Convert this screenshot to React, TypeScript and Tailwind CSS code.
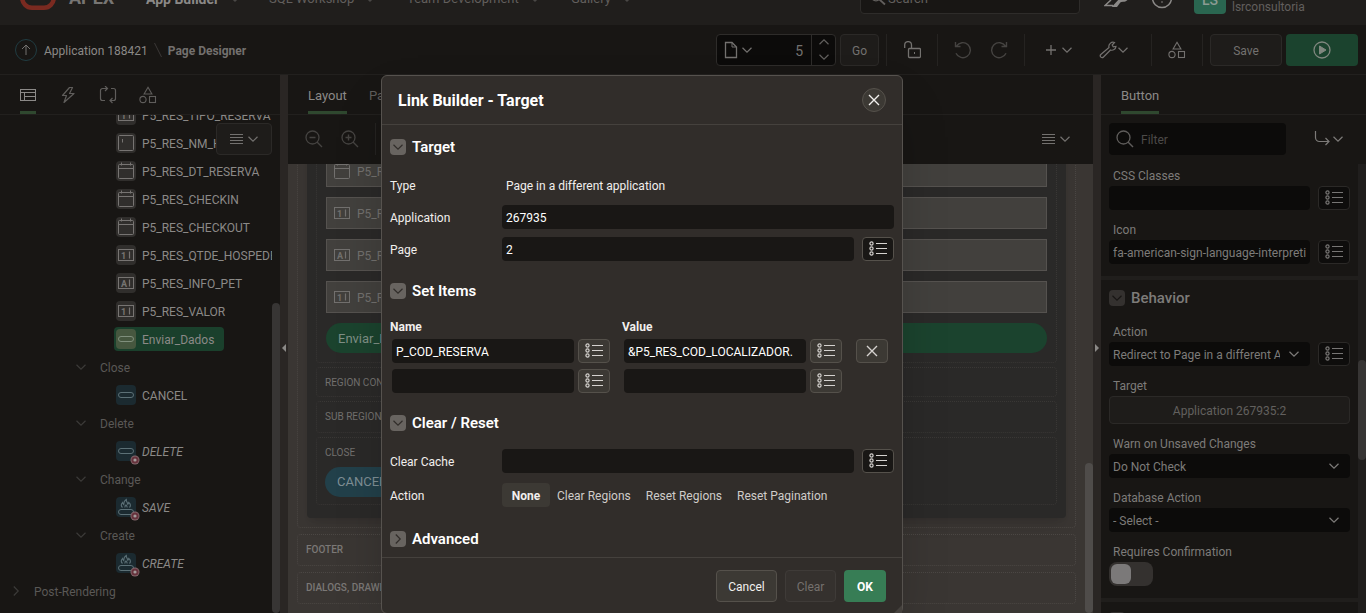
import React from "react";

type P = { className?: string };

function Svg({ className = "", children, size = 16 }: P & { children: React.ReactNode; size?: number }) {
  return (
    <svg width={size} height={size} viewBox={`0 0 ${size} ${size}`} fill="none" stroke="currentColor" className={"shrink-0 " + className} aria-hidden="true">
      {children}
    </svg>
  );
}

const Chevron = ({ className }: P) => (
  <Svg size={12} className={className}><path d="M1.5 3.8 6 8.2l4.5-4.4" strokeWidth="1.2" /></Svg>
);
const ChevronRight = ({ className }: P) => (
  <Svg size={12} className={className}><path d="M3.8 1.5 8.2 6l-4.4 4.5" strokeWidth="1.2" /></Svg>
);
const ListIcon = () => (
  <svg width="18" height="16" viewBox="0 0 18 16" fill="none" stroke="currentColor" className="shrink-0" aria-hidden="true">
    <circle cx="2.5" cy="2.5" r="1.6" strokeWidth="1.2" /><circle cx="2.5" cy="7.5" r="1.6" strokeWidth="1.2" /><circle cx="2.5" cy="12.5" r="1.6" strokeWidth="1.2" />
    <path d="M7 2.5h11M7 7.5h11M7 12.5h11" />
  </svg>
);
const MenuIcon = () => (
  <Svg><path d="M1 3.5h13M1 6.5h13M1 9.5h13M1 12.5h13" strokeWidth="1" /></Svg>
);
const Shapes = () => (
  <Svg size={18}><path d="M9 1.3 12.9 8H5.1Z" strokeWidth="1.1" /><circle cx="4" cy="13.5" r="3.1" strokeWidth="1.1" /><rect x="10.5" y="10.5" width="6" height="6" strokeWidth="1.1" /></Svg>
);
const CloseX = ({ size = 12 }: { size?: number }) => (
  <svg width={size} height={size} viewBox="0 0 12 12" fill="none" stroke="currentColor" strokeWidth="1.4" aria-hidden="true"><path d="m1 1 10 10M11 1 1 11" /></svg>
);

function TypeIcon({ kind }: { kind: string }) {
  if (kind === "calendar")
    return <Svg size={18}><rect x="1.5" y="2.5" width="15" height="14" rx="1" /><path d="M1.5 6.5h15M4.500 .5v3M13.500 .5v3" /></Svg>;
  if (kind === "text")
    return <Svg size={18}><rect x="1.5" y="1.5" width="15" height="15" rx="1" /><path d="M5.5 5v3.5" /></Svg>;
  if (kind === "button")
    return <Svg size={18}><rect x="1.5" y="6.5" width="15" height="5" rx="2.5" /></Svg>;
  if (kind === "hot")
    return (
      <Svg size={18}>
        <rect x="1.5" y="11.5" width="15" height="5" rx="2.5" />
        <path d="M5.500 9.500C3.800 8 4.200 6 5.500 4.500c.2 1 .6 1.500 1.200 2C6.700 4.200 7.500 2.500 9.300 1.500c-.2 2 1 2.800 1.500 4.700.6-.4.8-.9.900-1.700C13.800 6 13.900 8 12.500 9.500M8 9.500c-.3-1 .2-1.800 1-2.500.8.700 1.300 1.500 1 2.500" strokeWidth="1.1" />
      </Svg>
    );
  const letter = kind === "area" ? "A" : "1";
  return (
    <Svg size={18}>
      <rect x="1.5" y="3.5" width="15" height="11" />
      <text x="4" y="12.5" fontSize="9" fontWeight="700" fontFamily="Roboto, sans-serif" fill="currentColor" stroke="none">{letter}</text>
      <path d="M12.5 5.5v7" strokeWidth="1.2" />
    </Svg>
  );
}

type Row = { kind: string; name: string; tone?: string; off?: boolean };
const rows: Row[] = [
  { kind: "number", name: "P5_RES_TIPO_RESERVA" },
  { kind: "text", name: "P5_RES_NM_HOSPEDE" },
  { kind: "calendar", name: "P5_RES_DT_RESERVA" },
  { kind: "calendar", name: "P5_RES_CHECKIN" },
  { kind: "calendar", name: "P5_RES_CHECKOUT" },
  { kind: "number", name: "P5_RES_QTDE_HOSPEDES" },
  { kind: "area", name: "P5_RES_INFO_PET" },
  { kind: "number", name: "P5_RES_VALOR" },
  { kind: "button", name: "Enviar_Dados", tone: "selected" },
  { kind: "group", name: "Close" },
  { kind: "button", name: "CANCEL", tone: "blue" },
  { kind: "group", name: "Delete" },
  { kind: "button", name: "DELETE", tone: "blue", off: true },
  { kind: "group", name: "Change" },
  { kind: "hot", name: "SAVE", tone: "blue", off: true },
  { kind: "group", name: "Create" },
  { kind: "hot", name: "CREATE", tone: "blue", off: true },
];

function TreeRow({ row }: { row: Row }) {
  if (row.kind === "group")
    return (
      <li className="flex h-7 items-center pl-[75px] text-[#5a5856]">
        <Chevron className="text-[#3b3a38]" />
        <span className="pl-[13px] pt-[2px]">{row.name}</span>
      </li>
    );
  const tone = row.tone === "blue" ? "bg-[#1b2a30] text-[#5c7076]" : row.tone === "selected" ? "bg-[#46573f] text-[#7f8f7c]" : "bg-[#302e2c] text-[#777472]";
  return (
    <li className="flex h-7 items-center pl-[114px] text-[#8b8987]">
      <div className={"flex h-6 items-center rounded pl-[2px] pr-[10px] " + (row.tone === "selected" ? "bg-[#1a402c]" : "")}>
        <span className={"relative flex size-5 items-center justify-center rounded-sm " + tone}>
          <TypeIcon kind={row.kind} />
          {row.off && (
            <svg width="10" height="10" viewBox="0 0 10 10" className="absolute -bottom-1 -right-1" aria-hidden="true">
              <circle cx="5" cy="5" r="4.5" fill="#85696d" /><circle cx="5" cy="5" r="3.6" fill="#66323c" /><circle cx="5" cy="5" r="1.6" fill="#a39a9a" />
            </svg>
          )}
        </span>
        <span className={"whitespace-nowrap pl-[6px] pt-[2px] " + (row.off ? "italic" : "")}>{row.name}</span>
      </div>
    </li>
  );
}

const Sep = ({ className = "mx-[9px]" }: P) => <span className={"h-8 w-px bg-[#252321] " + className} />;

function Splitter({ right = false }: { right?: boolean }) {
  return (
    <div className="flex w-2 shrink-0 items-center justify-center bg-[#2a2624] pt-2">
      <svg width="4" height="8" viewBox="0 0 4 8" fill="#8b8987" aria-hidden="true"><path d={right ? "M0 0l4 4-4 4z" : "M4 0 0 4l4 4z"} /></svg>
    </div>
  );
}

function PickButton({ label, tone }: { label: string; tone: string }) {
  return (
    <button type="button" aria-label={label} className={"flex h-6 w-8 shrink-0 items-center justify-center rounded-sm border " + tone}>
      <ListIcon />
    </button>
  );
}
const dark = "border-[#55514b] bg-[#191715] text-[#d5d2cf]";
const light = "border-[#55514b] bg-[#3c3934] text-[#d5d2cf]";
const dim = "border-[#2b2927] bg-[#0e0d0c] text-[#777574]";
const modalInput = "h-6 min-w-0 flex-1 rounded-sm bg-[#191715] px-1 pt-[2px] text-white outline-none";
const propInput = "h-6 w-full min-w-0 rounded-sm bg-[#0c0b0a] px-1 pt-[2px] outline-none";

function SectionHead({ title, closed = false }: { title: string; closed?: boolean }) {
  return (
    <h2 className="flex h-6 items-center text-[15px] font-semibold text-white">
      <button type="button" aria-label={"Toggle " + title} className="flex size-4 items-center justify-center rounded-sm bg-[#686460] text-[#312d2a]">
        {closed ? <ChevronRight /> : <Chevron />}
      </button>
      <span className="pl-[6px] pt-[2px]">{title}</span>
    </h2>
  );
}

function PropSelect({ id, label, value, pick = false }: { id: string; label: string; value: string; pick?: boolean }) {
  return (
    <div className="pb-[10px]">
      <label htmlFor={id} className="block h-5 px-1 leading-5">{label}</label>
      <div className="flex gap-2">
        <div className="relative min-w-0 flex-1">
          <select id={id} className={propInput + " block appearance-none pr-[30px]"}><option>{value}</option></select>
          <Chevron className="pointer-events-none absolute right-[10px] top-[6px]" />
        </div>
        {pick && <PickButton label={"Pick " + label} tone={dim} />}
      </div>
    </div>
  );
}

function PropText({ id, label, value }: { id: string; label: string; value: string }) {
  return (
    <div className="pb-[10px]">
      <label htmlFor={id} className="block h-5 px-1 leading-5">{label}</label>
      <div className="flex gap-2">
        <input id={id} defaultValue={value} className={propInput} />
        <PickButton label={"Pick " + label} tone={dim} />
      </div>
    </div>
  );
}

function Header() {
  return (
    <header className="flex h-[25px] shrink-0 flex-col justify-end overflow-hidden bg-[#201e1c]">
      <div className="flex h-[54px] shrink-0 items-center pr-[66px] text-[13px] text-[#625f5d]">
        <svg width="36" height="24" viewBox="0 0 36 24" fill="none" stroke="#7a2a20" strokeWidth="4.5" className="ml-5 shrink-0" aria-hidden="true"><rect x="2.25" y="2.25" width="31.5" height="19.5" rx="9.75" /></svg>
        <span className="w-[77px] pl-[13px] text-lg font-bold text-[#777573]">APEX</span>
        <nav className="flex flex-1 items-center pt-[2px]">
          <a href="#app" className="flex w-[136px] items-center gap-[10px] pl-[13px] text-[14px] font-bold text-[#8b8987]">App Builder<Chevron className="text-[#4a4846]" /></a>
          <a href="#sql" className="flex w-[138px] items-center gap-[10px]">SQL Workshop<Chevron className="text-[#4a4846]" /></a>
          <a href="#team" className="flex w-[164px] items-center gap-[10px]">Team Development<Chevron className="text-[#4a4846]" /></a>
          <a href="#gallery" className="flex items-center gap-[10px]">Gallery<Chevron className="text-[#4a4846]" /></a>
        </nav>
        <div className="flex h-8 w-[220px] items-center rounded-sm border border-[#2e2c2a] bg-[#181614] pl-[9px]">
          <Svg><circle cx="6" cy="6" r="4.8" strokeWidth="1.3" /><path d="m9.5 9.5 5.5 5" strokeWidth="1.8" /></Svg>
          <input aria-label="Search" placeholder="Search" className="min-w-0 flex-1 bg-transparent pl-[2px] pt-[2px] outline-none placeholder:text-[#625f5d]" />
        </div>
        <svg width="24" height="20" viewBox="0 0 24 20" fill="none" stroke="#8b8987" strokeWidth="1.5" className="ml-6" aria-hidden="true"><path d="M15 3H5M7 12 1 17.500h8" /><path d="m10 18 6.500-7a4 4 0 1 1 4.500 1.500c-2 .5-4-.5-5.500 1.500L12.500 18z" strokeWidth="2" /></svg>
        <svg width="22" height="22" viewBox="0 0 22 22" fill="none" stroke="#8b8987" strokeWidth="1.5" className="ml-[23px]" aria-hidden="true"><circle cx="11" cy="11" r="9.5" /><path d="M8.500 8a2.500 2.500 0 1 1 2.500 3v1.500" /><circle cx="11" cy="15" r=".8" fill="#8b8987" stroke="none" /></svg>
        <div className="ml-[21px] flex size-8 items-center justify-center rounded-sm bg-[#2a6650] pt-1 text-sm font-medium text-[#8b9b93]">LS</div>
        <div className="w-[74px] pl-[6px] pt-[2px] text-xs leading-[16px]"><div>LS</div><div>lsrconsultoria</div></div>
      </div>
    </header>
  );
}

function Toolbar() {
  const ib = "flex h-8 w-8 items-center justify-center";
  return (
    <div className="flex h-[50px] shrink-0 items-center border-b border-[#22201e] pl-[15px] pr-2">
      <a href="#up" aria-label="Up" className="flex size-[22px] items-center justify-center rounded-full border border-[#203c42]"><Svg size={12}><path d="M6 11V1M2 5l4-4 4 4" /></Svg></a>
      <a href="#application" className="pl-[7px] pt-[2px] text-[#8b8987]">Application 188421</a>
      <svg width="8" height="16" viewBox="0 0 8 16" stroke="#3b3937" className="mx-[6px]" aria-hidden="true"><path d="M.5 1 7.5 15" /></svg>
      <h1 className="flex-1 pt-[2px] font-bold text-[#73706e]">Page Designer</h1>
      <div className="flex h-8 w-[120px] rounded-sm border border-[#2e2c2a] bg-[#0c0b0a]">
        <button type="button" aria-label="Page list" className="flex items-center pl-[6px]">
          <Svg size={18}><path d="M2.5 1.5H9L13.5 6v10.500h-11z" strokeWidth="1.3" /><path d="M9 1.5V6h4.500" /></Svg>
          <Chevron />
        </button>
        <input aria-label="Page number" defaultValue="5" className="min-w-0 flex-1 bg-transparent pr-2 pt-[2px] text-right text-sm outline-none" />
        <span className="flex w-6 flex-col items-center justify-around border-l border-[#2e2c2a] text-[#62605e]"><Chevron className="rotate-180" /><Chevron /></span>
      </div>
      <button type="button" className="ml-1 h-8 w-[39px] rounded-sm border border-[#2b2927] bg-[#1e1c1a] pt-[2px]">Go</button>
      <Sep className="ml-[7px] mr-[9px]" />
      <button type="button" aria-label="Lock" className={ib}><Svg size={18}><rect x="5.5" y="7.5" width="12" height="9" rx="1" strokeWidth="1.3" /><path d="M8.5 7V4A3.400 3.400 0 0 0 1.7 4v3" strokeWidth="1.3" /><path d="M11.5 11v2" /></Svg></button>
      <Sep />
      <button type="button" aria-label="Undo" className={ib + " text-[#454341]"}><Svg size={18}><path d="M1.5 1v4.500h5M2.500 5.200a7.500 7.500 0 1 1-.5 7" strokeWidth="1.4" /></Svg></button>
      <button type="button" aria-label="Redo" className={ib + " ml-1 text-[#454341]"}><Svg size={18}><path d="M16.5 1v4.500h-5M15.500 5.200a7.500 7.500 0 1 0 .5 7" strokeWidth="1.4" /></Svg></button>
      <Sep />
      <button type="button" aria-label="Create" className="flex h-8 w-12 items-center justify-center gap-[2px]"><Svg><path d="M8 3v10M3 8h10" strokeWidth="1.3" /></Svg><Chevron /></button>
      <button type="button" aria-label="Utilities" className="ml-2 flex h-8 w-[52px] items-center justify-center pr-1"><Svg size={18}><path d="M10 6.500a4.200 4.200 0 0 1 5.500-5l-2.300 2.600 1.100 1.700 2.700-.3A4.200 4.200 0 0 1 11.500 9l-7 7a1.800 1.800 0 0 1-2.700-2.500z" strokeWidth="1.2" /></Svg><Chevron /></button>
      <Sep />
      <button type="button" aria-label="Shared components" className={ib}><Shapes /></button>
      <Sep className="ml-[9px] mr-[7px]" />
      <button type="button" className="h-8 w-[72px] rounded-sm border border-[#2b2927] bg-[#1e1c1a] pt-[2px]">Save</button>
      <button type="button" aria-label="Run" className="ml-1 flex h-8 w-[72px] items-center justify-center rounded-sm bg-[#1b432e]"><Svg size={18} className="text-[#80877f]"><circle cx="9" cy="9" r="8" strokeWidth="1.3" /><path d="M6.5 5v8l6.500-4z" fill="currentColor" /></Svg></button>
    </div>
  );
}

function TreePanel() {
  return (
    <aside className="relative flex w-[280px] shrink-0 flex-col">
      <div className="flex h-10 shrink-0 items-stretch gap-4 border-b border-[#22201e] px-4 text-[#5f5d5b]">
        <button type="button" aria-label="Rendering" className="relative flex w-6 items-center justify-center text-[#8b8987]">
          <Svg size={18}><path d="M1 3.5h16M1 6.5h16M1 14.5h16M1.5 3v12M16.5 3v12M5.5 6v8.500M6 10.500h10.500" /></Svg>
          <span className="absolute bottom-0 left-1 h-[3px] w-4 bg-[#2f482f]" />
        </button>
        <button type="button" aria-label="Dynamic actions" className="flex w-6 items-center justify-center"><Svg size={18}><path d="M10.500 1.500 3.500 9.500h4l-2.500 7L15 7.500h-4.500l3-6z" strokeWidth="1.2" strokeLinejoin="round" /></Svg></button>
        <button type="button" aria-label="Processing" className="flex w-6 items-center justify-center"><Svg size={18}><path d="M4 2.500H3.500a2 2 0 0 0-2 2v8a2 2 0 0 0 2 2H6M12 2.500h2.500a2 2 0 0 1 2 2v8a2 2 0 0 1-2 2H11M3.500 2.500H8M6 0l2.500 2.500L6 5M13.500 12 11 14.500l2.500 2.500" strokeWidth="1.2" /></Svg></button>
        <button type="button" aria-label="Shared components tree" className="flex w-6 items-center justify-center"><Shapes /></button>
      </div>
      <div className="flex min-h-0 flex-1">
        <ul className="-mt-[14px] min-w-0 flex-1 overflow-hidden [clip-path:inset(14px_0_0_0)]">
          {rows.map((r) => <TreeRow key={r.kind + r.name} row={r} />)}
          <li className="flex h-7 items-center gap-3 pl-[10px] text-[#5a5856]"><ChevronRight className="text-[#3b3a38]" /><span className="pt-[2px]">Post-Rendering</span></li>
        </ul>
        <div className="flex w-2 items-end"><span className="h-[310px] w-full rounded bg-[#373534]" /></div>
      </div>
      <button type="button" aria-label="Tree menu" className="absolute right-2 top-12 flex h-8 w-14 items-center justify-center gap-[2px] rounded-sm border border-[#2b2927] bg-[#1e1c1a] text-[#73716f]"><MenuIcon /><Chevron /></button>
    </aside>
  );
}

const canvasItems = [
  { kind: "calendar", name: "P5_RES_CHECKOUT" },
  { kind: "number", name: "P5_RES_QTDE_HOSPEDES" },
  { kind: "area", name: "P5_RES_INFO_PET" },
  { kind: "number", name: "P5_RES_VALOR" },
];

function Canvas() {
  const slot = "rounded-sm border border-dotted border-[#393735] px-2 text-[10px] text-[#72706e]";
  const band = "mt-[6px] h-8 rounded-sm border border-dotted border-[#4b4744] px-2 text-[10px] font-medium leading-[30px] text-[#7b7876]";
  return (
    <main className="flex min-w-0 flex-1 flex-col">
      <div className="flex h-10 shrink-0 gap-[22px] border-b border-[#22201e] px-5 text-[13px] text-[#5f5d5b]">
        <button type="button" className="relative pt-[2px] text-[#8b8987]">Layout<span className="absolute inset-x-0 bottom-0 h-[3px] bg-[#2f482f]" /></button>
        <button type="button" className="pt-[2px]">Page Search</button>
      </div>
      <div className="flex h-[49px] shrink-0 items-center pb-[2px] pl-4 pr-[22px]">
        <button type="button" aria-label="Zoom out" className="flex h-8 w-5 items-center justify-center text-[#454341]"><Svg size={18}><circle cx="7.5" cy="7.5" r="6.5" strokeWidth="1.3" /><path d="M4.5 7.5h6M12 12l5 5" strokeWidth="1.4" /></Svg></button>
        <button type="button" aria-label="Zoom in" className="ml-4 flex h-8 w-5 items-center justify-center text-[#454341]"><Svg size={18}><circle cx="7.5" cy="7.5" r="6.5" strokeWidth="1.3" /><path d="M4.5 7.5h6M7.5 4.5v6M12 12l5 5" strokeWidth="1.4" /></Svg></button>
        <Sep className="ml-[15px] mr-auto" />
        <button type="button" aria-label="Layout menu" className="flex items-center gap-[2px]"><MenuIcon /><Chevron /></button>
      </div>
      <div className="flex min-h-0 flex-1 overflow-hidden bg-[#3a3633]">
        <div className="-mt-[38px] min-w-0 flex-1 px-[9px]">
          <div className="rounded-sm border border-dotted border-[#4b4744] p-[9px]">
            <div className="flex flex-col gap-1 rounded bg-[#2a2928] px-[9px] pb-[13px] pt-[9px] shadow-lg">
              <div className="flex flex-col gap-[10px] rounded-sm border border-dotted border-[#393735] p-[9px]">
                {canvasItems.map((i) => (
                  <div key={i.name} className="flex h-8 items-center gap-[6px] border border-[#55524f] bg-[#42403d] pl-[6px] text-[#72706e]"><TypeIcon kind={i.kind} /><span className="pt-[2px]">{i.name}</span></div>
                ))}
                <button type="button" className="h-[30px] rounded-full bg-[#1b432e] px-3 pt-[2px] text-left text-[13px] text-[#7f8f85]">Enviar_Dados</button>
              </div>
              <div className={slot + " h-[30px] leading-[30px]"}>REGION CONTENT</div>
              <div className={slot + " h-8 leading-[30px]"}>SUB REGIONS</div>
              <div className={slot + " h-[68px]"}>
                <div className="h-[29px] leading-[30px]">CLOSE</div>
                <button type="button" className="h-[30px] rounded-full bg-[#22404a] px-3 text-[13px] text-[#7f8f95]">CANCEL</button>
              </div>
            </div>
          </div>
          <div className={band}>FOOTER</div>
          <div className={band}>DIALOGS, DRAWERS AND POPUPS</div>
        </div>
        <div className="flex w-2 items-end"><span className="h-[150px] w-full rounded bg-[#4f4c4a]" /></div>
      </div>
    </main>
  );
}

function Properties() {
  return (
    <aside className="flex w-[265px] shrink-0 flex-col text-[#7d7b79]">
      <div className="flex h-10 shrink-0 border-b border-[#22201e] pl-5 text-[13px]">
        <button type="button" className="relative pt-[2px] text-[#8b8987]">Button<span className="absolute inset-x-0 bottom-0 h-[3px] bg-[#2f482f]" /></button>
      </div>
      <div className="flex h-[49px] shrink-0 items-center justify-between pb-px pl-2 pr-[22px]">
        <div className="flex h-8 w-[177px] items-center rounded-sm bg-[#0c0b0a] pl-[7px] text-[#5f5d5b]">
          <Svg size={18}><circle cx="7.5" cy="7.5" r="6.5" strokeWidth="1.3" /><path d="m12 12 5 5" strokeWidth="1.4" /></Svg>
          <input aria-label="Filter" placeholder="Filter" className="min-w-0 flex-1 bg-transparent pl-[7px] pt-[2px] outline-none placeholder:text-[#4c4a48]" />
        </div>
        <button type="button" aria-label="Go to group" className="flex items-center gap-[2px]"><Svg><path d="M1.5 0v6.500a4 4 0 0 0 4 4H15M11.5 7l3.500 3.500-3.500 3.500" strokeWidth="1.2" /></Svg><Chevron /></button>
      </div>
      <div className="flex min-h-0 flex-1 overflow-hidden">
        <div className="min-w-0 flex-1">
          <div className="border-b-4 border-[#201e1c] px-2 pb-[2px] pt-[2px]">
            <PropText id="css" label="CSS Classes" value="" />
            <PropText id="icon" label="Icon" value="fa-american-sign-language-interpreting" />
          </div>
          <div className="border-b-4 border-[#201e1c] px-2">
            <h2 className="flex h-[42px] items-center pb-[6px] text-[15px] font-medium">
              <button type="button" aria-label="Toggle Behavior" className="flex size-4 items-center justify-center rounded-sm bg-[#34312f] text-[#181614]"><Chevron /></button>
              <span className="pl-[6px] pt-[2px]">Behavior</span>
            </h2>
            <PropSelect id="action" label="Action" value="Redirect to Page in a different Application" pick />
            <div className="pb-[10px]">
              <label htmlFor="target" className="block h-5 px-1 leading-5">Target</label>
              <button id="target" type="button" className="block h-7 w-full rounded-sm border border-[#2b2927] bg-[#1e1c1a] pt-[2px] text-[#62605e]">Application 267935:2</button>
            </div>
            <PropSelect id="warn" label="Warn on Unsaved Changes" value="Do Not Check" />
            <PropSelect id="dba" label="Database Action" value="- Select -" />
            <label htmlFor="confirm" className="block h-5 px-1 leading-5">Requires Confirmation</label>
            <input id="confirm" type="checkbox" role="switch" className="mb-3 block h-6 w-11 appearance-none rounded-lg bg-[#34312f] p-[2px] before:block before:size-5 before:rounded-md before:bg-[#7b7979]" />
          </div>
          <div className="px-2 pt-[10px]"><span className="block size-4 rounded-sm bg-[#34312f]" /></div>
        </div>
        <div className="w-2 bg-[#201e1d] pt-[196px]"><span className="block h-[100px] w-full rounded bg-[#373534]" /></div>
      </div>
    </aside>
  );
}

function LinkBuilder() {
  const lab = "w-28 shrink-0 pt-[2px]";
  return (
    <div role="dialog" aria-label="Link Builder - Target" className="absolute left-[381px] top-[75px] flex w-[522px] flex-col rounded-md border border-[#56524e] bg-[#312d2a] text-[#f1efed] shadow-2xl">
      <div className="flex h-[49px] items-center justify-between border-b border-[#45413d] pl-4 pr-4">
        <h2 className="pt-[2px] text-base font-bold text-white">Link Builder - Target</h2>
        <button type="button" aria-label="Close" className="flex size-6 items-center justify-center rounded-full border border-[#55514b] bg-[#3c3934]"><CloseX /></button>
      </div>
      <div className="border-b border-[#45413d] px-2 pb-[6px] pt-[10px]">
        <SectionHead title="Target" />
        <div className="flex flex-col gap-2 pt-[14px]">
          <div className="flex h-6 items-center"><span className={lab}>Type</span><span className="pl-1 pt-[2px]">Page in a different application</span></div>
          <div className="flex h-6 items-center"><label htmlFor="m-app" className={lab}>Application</label><input id="m-app" defaultValue="267935" className={modalInput} /></div>
          <div className="flex h-6 items-center"><label htmlFor="m-page" className={lab}>Page</label><input id="m-page" defaultValue="2" className={modalInput + " mr-2"} /><PickButton label="Pick page" tone={dark} /></div>
        </div>
        <div className="pt-[18px]"><SectionHead title="Set Items" /></div>
        <table className="mt-3 w-[500px] table-fixed border-collapse text-left">
          <thead><tr className="h-6"><th className="w-[232px] p-0 font-bold">Name</th><th className="w-[232px] p-0 font-bold">Value</th><th className="p-0" aria-label="Remove" /></tr></thead>
          <tbody>
            {[["P_COD_RESERVA", "&P5_RES_COD_LOCALIZADOR."], ["", ""]].map((r, n) => (
              <tr key={n} className="h-[30px] align-top">
                {r.map((v, k) => (
                  <td key={k} className="p-0"><div className="flex gap-1 pl-[2px] pr-3"><input aria-label={(k ? "Value " : "Name ") + (n + 1)} defaultValue={v} className={modalInput} /><PickButton label={"Pick " + (k ? "value " : "name ") + (n + 1)} tone={light} /></div></td>
                ))}
                <td className="p-0 pl-[2px]">{n === 0 && <button type="button" aria-label="Remove row" className={"flex h-6 w-8 items-center justify-center rounded-sm border " + light}><CloseX /></button>}</td>
              </tr>
            ))}
          </tbody>
        </table>
        <div className="pt-3"><SectionHead title="Clear / Reset" /></div>
        <div className="flex flex-col gap-[10px] pt-[14px]">
          <div className="flex h-6 items-center"><label htmlFor="m-cache" className={lab}>Clear Cache</label><input id="m-cache" className={modalInput + " mr-2"} /><PickButton label="Pick cache" tone={dark} /></div>
          <div className="flex h-6 items-center">
            <span className={lab}>Action</span>
            <button type="button" className="h-6 w-12 rounded-sm bg-[#3c3934] pt-[2px] font-bold">None</button>
            <div className="flex gap-[15px] pl-[7px] pt-[2px] text-[#cfccc9]"><button type="button">Clear Regions</button><button type="button">Reset Regions</button><button type="button">Reset Pagination</button></div>
          </div>
        </div>
        <div className="pt-5"><SectionHead title="Advanced" closed /></div>
      </div>
      <div className="flex h-[55px] items-center justify-end gap-2 pr-4">
        <button type="button" className="h-8 w-[61px] rounded-sm border border-[#55514b] bg-[#3c3934] pt-[2px]">Cancel</button>
        <button type="button" disabled className="h-8 w-[51px] rounded-sm border border-[#3f3b38] bg-[#35312e] pt-[2px] text-[#74706d]">Clear</button>
        <button type="button" className="h-8 w-[42px] rounded-sm bg-[#377d55] pt-[2px] font-bold text-white">OK</button>
      </div>
      <svg width="8" height="8" viewBox="0 0 8 8" fill="#45413d" className="absolute bottom-0 right-0" aria-hidden="true"><path d="M8 0v8H0z" /></svg>
    </div>
  );
}

export default function App() {
  return (
    <div className="relative flex h-screen flex-col overflow-hidden bg-[#181614] font-['Roboto',sans-serif] text-xs text-[#73716f]">
      <Header />
      <Toolbar />
      <div className="flex min-h-0 flex-1">
        <TreePanel />
        <Splitter />
        <Canvas />
        <Splitter right />
        <Properties />
      </div>
      <LinkBuilder />
    </div>
  );
}
